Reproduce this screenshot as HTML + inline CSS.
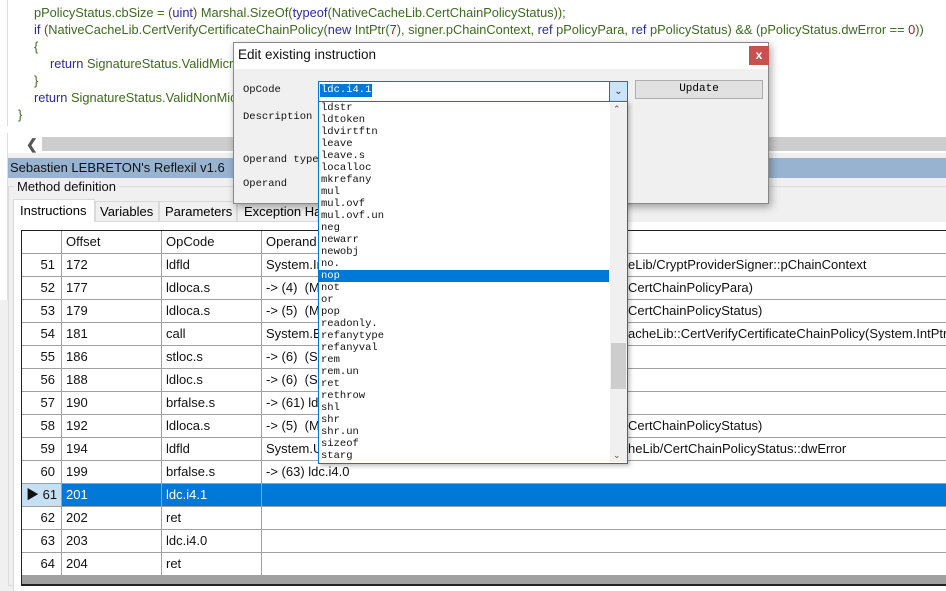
<!DOCTYPE html>
<html><head><meta charset="utf-8"><style>
*{margin:0;padding:0;box-sizing:border-box}
body{width:946px;height:591px;overflow:hidden;background:#f0f0f0;font-family:"Liberation Sans","Noto Sans CJK SC",sans-serif;position:relative}
.abs{position:absolute}
.code{left:8px;top:0;width:938px;height:133px;background:#fff;font-size:12.8px;color:#3d6a1e}
.code div{position:absolute;white-space:nowrap;line-height:17px}
.k{color:#2a2aa8}.n{color:#a02020}.p{color:#6a4a10}
.hs{left:8px;top:133px;width:938px;height:20px;background:#fff}
.title{left:8px;top:158px;width:938px;height:20px;background:#98b3d0;font-size:13px;line-height:20px;padding-left:2px;color:#111}
.grid{left:21px;top:230px;width:925px;height:356px;background:#a0a0a0;border-left:1px solid #222;border-top:1px solid #222}
.row{position:absolute;left:0;width:925px;height:23px;background:#fff;border-bottom:1px solid #a0a0a0;font-size:13px;line-height:22px;color:#111}
.row span{position:absolute;top:0;height:22px;border-right:1px solid #a0a0a0;white-space:nowrap;overflow:hidden;padding-left:4px}
.row span i{font-style:normal;position:absolute;left:366px;top:0}
.c0{left:0;width:40px;text-align:right;padding-right:6px}
.c1{left:40px;width:100px}
.c2{left:140px;width:100px}
.c3{left:240px;width:685px;border-right:none!important}
.sel{background:#0078d7;color:#fff}
.sel .c0{background:#c6dff3;color:#111}
.dlg{left:233px;top:42px;width:536px;height:162px;background:#f0f0f0;border:1px solid #888;box-shadow:2px 3px 8px rgba(0,0,0,.35)}
.mono{font-family:"Liberation Mono","Noto Sans CJK SC",monospace;font-size:10.5px;color:#111}
.list div{height:12px;line-height:12px;padding-left:2px;white-space:nowrap}
</style></head><body>
<div class="abs" style="left:0;top:0;width:8px;height:300px;background:#fff;border-right:1px solid #ddd"></div>
<div class="abs code">
<div style="left:26px;top:4px">pPolicyStatus.cbSize = <span class="p">(</span><span class="k">uint</span><span class="p">)</span> Marshal.SizeOf(<span class="k">typeof</span>(NativeCacheLib.CertChainPolicyStatus));</div>
<div style="left:26px;top:21px"><span class="k">if</span> <span class="p">(</span>NativeCacheLib.CertVerifyCertificateChainPolicy(<span class="k">new</span> IntPtr(<span class="n">7</span>), signer.pChainContext, <span class="k">ref</span> pPolicyPara, <span class="k">ref</span> pPolicyStatus) &amp;&amp; (pPolicyStatus.dwError == <span class="n">0</span>))</div>
<div style="left:26px;top:38px">{</div>
<div style="left:42px;top:55px"><span class="k">return</span> SignatureStatus.ValidMicrosoft;</div>
<div style="left:26px;top:72px">}</div>
<div style="left:26px;top:89px"><span class="k">return</span> SignatureStatus.ValidNonMicrosoft;</div>
<div style="left:10px;top:106px">}</div>
</div>
<div class="abs" style="left:0;top:126px;width:946px;height:7px;background:#fff"></div>
<div class="abs hs"><div class="abs" style="left:18px;top:3px;font-size:14px;color:#555;font-weight:bold">&#10094;</div><div class="abs" style="left:34px;top:4px;width:904px;height:14px;background:#cdcdcd"></div></div>
<div class="abs title">Sebastien LEBRETON's Reflexil v1.6</div>
<div class="abs" style="left:8px;top:186px;width:938px;height:400px;border:1px solid #dcdcdc;border-right:none"></div>
<div class="abs" style="left:14px;top:179px;background:#f0f0f0;padding:0 3px;font-size:13px;color:#111">Method definition</div>
<div class="abs" style="left:13px;top:199px;width:82px;height:24px;background:#fff;border:1px solid #d9d9d9;border-bottom:none;font-size:13px;line-height:22px;padding-left:6px">Instructions</div>
<div class="abs" style="left:95px;top:201px;width:64px;height:21px;border:1px solid #d9d9d9;font-size:13px;line-height:20px;padding-left:4px">Variables</div>
<div class="abs" style="left:159px;top:201px;width:78px;height:21px;border:1px solid #d9d9d9;font-size:13px;line-height:20px;padding-left:5px">Parameters</div>
<div class="abs" style="left:237px;top:201px;width:125px;height:21px;border:1px solid #d9d9d9;font-size:13px;line-height:20px;padding-left:6px;white-space:nowrap;overflow:hidden">Exception Handlers</div>
<div class="abs" style="left:13px;top:222px;width:933px;height:369px;background:#fff;border-left:1px solid #d9d9d9"></div>
<div class="abs grid">
<div class="row" style="top:0"><span class="c0"></span><span class="c1">Offset</span><span class="c2">OpCode</span><span class="c3">Operand</span></div>
<div class="row" style="top:23px"><span class="c0">51</span><span class="c1">172</span><span class="c2">ldfld</span><span class="c3">System.In<i>eLib/CryptProviderSigner::pChainContext</i></span></div>
<div class="row" style="top:46px"><span class="c0">52</span><span class="c1">177</span><span class="c2">ldloca.s</span><span class="c3">-&gt; (4)&nbsp; (M<i>CertChainPolicyPara)</i></span></div>
<div class="row" style="top:69px"><span class="c0">53</span><span class="c1">179</span><span class="c2">ldloca.s</span><span class="c3">-&gt; (5)&nbsp; (M<i>CertChainPolicyStatus)</i></span></div>
<div class="row" style="top:92px"><span class="c0">54</span><span class="c1">181</span><span class="c2">call</span><span class="c3">System.B<i>acheLib::CertVerifyCertificateChainPolicy(System.IntPtr,System</i></span></div>
<div class="row" style="top:115px"><span class="c0">55</span><span class="c1">186</span><span class="c2">stloc.s</span><span class="c3">-&gt; (6)&nbsp; (S</span></div>
<div class="row" style="top:138px"><span class="c0">56</span><span class="c1">188</span><span class="c2">ldloc.s</span><span class="c3">-&gt; (6)&nbsp; (S</span></div>
<div class="row" style="top:161px"><span class="c0">57</span><span class="c1">190</span><span class="c2">brfalse.s</span><span class="c3">-&gt; (61) ld</span></div>
<div class="row" style="top:184px"><span class="c0">58</span><span class="c1">192</span><span class="c2">ldloca.s</span><span class="c3">-&gt; (5)&nbsp; (M<i>CertChainPolicyStatus)</i></span></div>
<div class="row" style="top:207px"><span class="c0">59</span><span class="c1">194</span><span class="c2">ldfld</span><span class="c3">System.U<i>heLib/CertChainPolicyStatus::dwError</i></span></div>
<div class="row" style="top:230px"><span class="c0">60</span><span class="c1">199</span><span class="c2">brfalse.s</span><span class="c3">-&gt; (63) ldc.i4.0</span></div>
<div class="row sel" style="top:253px"><span class="c0">&#9654; 61</span><span class="c1">201</span><span class="c2">ldc.i4.1</span><span class="c3"></span></div>
<div class="row" style="top:276px"><span class="c0">62</span><span class="c1">202</span><span class="c2">ret</span><span class="c3"></span></div>
<div class="row" style="top:299px"><span class="c0">63</span><span class="c1">203</span><span class="c2">ldc.i4.0</span><span class="c3"></span></div>
<div class="row" style="top:322px"><span class="c0">64</span><span class="c1">204</span><span class="c2">ret</span><span class="c3"></span></div>
</div>
<div class="abs" style="left:21px;top:584px;width:925px;height:2px;background:#222"></div>

<div class="abs dlg">
<div class="abs" style="left:0;top:0;width:534px;height:26px;background:#fff"></div>
<div class="abs" style="left:4px;top:4px;font-size:13.5px;color:#111">Edit existing instruction</div>
<div class="abs" style="left:515px;top:3px;width:20px;height:19px;background:#c75050;color:#fff;font-size:12px;text-align:center;line-height:18px;font-weight:bold">x</div>
<div class="abs mono" style="left:9px;top:41px">OpCode</div>
<div class="abs mono" style="left:9px;top:68px">Description</div>
<div class="abs mono" style="left:9px;top:111px">Operand type</div>
<div class="abs mono" style="left:9px;top:135px">Operand</div>
<div class="abs" style="left:401px;top:37px;width:128px;height:19px;background:#e1e1e1;border:1px solid #adadad;font-family:'Liberation Mono',monospace;font-size:11px;text-align:center;line-height:17px">Update</div>
</div>
<div class="abs" style="left:318px;top:81px;width:310px;height:21px;background:#fff;border:1px solid #0078d7"></div>
<div class="abs mono" style="left:320px;top:84px;background:#0078d7;color:#fff;line-height:13px;padding:0 1px">ldc.i4.1</div>
<div class="abs" style="left:609px;top:81px;width:19px;height:21px;background:#cce4f7;border:1px solid #0078d7;text-align:center;font-size:10px;line-height:19px;color:#333">&#8964;</div>
<div class="abs" style="left:318px;top:101px;width:310px;height:363px;background:#fff;border:1px solid #0078d7;box-shadow:2px 2px 4px rgba(0,0,0,.25)"></div>
<div class="abs" style="left:610px;top:103px;width:17px;height:359px;background:#f0f0f0"></div>
<div class="abs" style="left:611px;top:343px;width:15px;height:46px;background:#cdcdcd"></div>
<div class="abs" style="left:613px;top:104px;font-size:9px;color:#555">&#8963;</div>
<div class="abs" style="left:613px;top:450px;font-size:9px;color:#555">&#8964;</div>
<div class="abs list mono" style="left:319px;top:102px;width:290px">
<div>ldstr</div><div>ldtoken</div><div>ldvirtftn</div><div>leave</div><div>leave.s</div><div>localloc</div><div>mkrefany</div><div>mul</div><div>mul.ovf</div><div>mul.ovf.un</div><div>neg</div><div>newarr</div><div>newobj</div><div>no.</div><div style="background:#0078d7;color:#fff">nop</div><div>not</div><div>or</div><div>pop</div><div>readonly.</div><div>refanytype</div><div>refanyval</div><div>rem</div><div>rem.un</div><div>ret</div><div>rethrow</div><div>shl</div><div>shr</div><div>shr.un</div><div>sizeof</div><div>starg</div>
</div>
</body></html>
